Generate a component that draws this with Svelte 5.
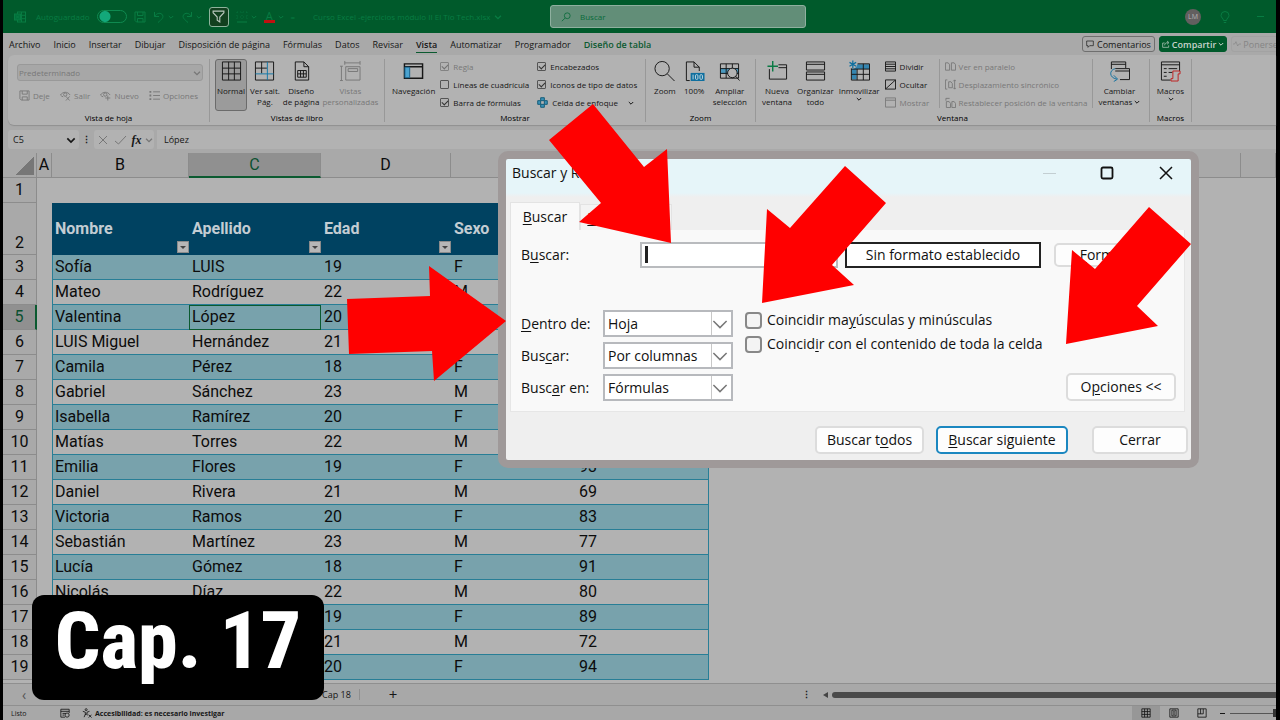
<script>
  const tabs = [
    'Archivo', 'Inicio', 'Insertar', 'Dibujar', 'Disposición de página', 'Fórmulas',
    'Datos', 'Revisar', 'Vista', 'Automatizar', 'Programador', 'Diseño de tabla'
  ];

  const letters = ['A', 'B', 'C', 'D', 'E', 'F', 'G', 'H', 'I', 'J', ''];
  const headers = ['Nombre', 'Apellido', 'Edad', 'Sexo', 'Nota'];

  const people = [
    ['Sofía', 'LUIS', 19, 'F', ''],
    ['Mateo', 'Rodríguez', 22, 'M', ''],
    ['Valentina', 'López', 20, 'F', ''],
    ['LUIS Miguel', 'Hernández', 21, 'M', ''],
    ['Camila', 'Pérez', 18, 'F', ''],
    ['Gabriel', 'Sánchez', 23, 'M', ''],
    ['Isabella', 'Ramírez', 20, 'F', ''],
    ['Matías', 'Torres', 22, 'M', ''],
    ['Emilia', 'Flores', 19, 'F', 93],
    ['Daniel', 'Rivera', 21, 'M', 69],
    ['Victoria', 'Ramos', 20, 'F', 83],
    ['Sebastián', 'Martínez', 23, 'M', 77],
    ['Lucía', 'Gómez', 18, 'F', 91],
    ['Nicolás', 'Díaz', 22, 'M', 80],
    ['', '', 19, 'F', 89],
    ['', '', 21, 'M', 72],
    ['', '', 20, 'F', 94]
  ];

  const arrows = [
    '549,140 601,203 579,222 671,243 667,149 644,167 593,104',
    '347,299 430,296 429,266 506,321 434,381 432,351 349,354',
    '845,166 886,203 832,265 854,285 762,303 767,209 790,228',
    '1149,207 1191,244 1137,306 1158,326 1066,344 1072,250 1095,269'
  ];

  // inner markup of the stroke icons; the first entry is the viewBox
  const icons = {
    excel: ['0 0 12 12', '<rect x="3.5" y="1" width="8" height="10"/><path d="M7.500 1v10M3.500 4.300h8M3.500 7.700h8"/><rect x=".5" y="3" width="6" height="6" fill="#00703a"/><path d="M2 4.500l3 3M5 4.500l-3 3"/>'],
    save: ['0 0 12 12', '<path d="M1 1h10v10H2.500L1 9.500zM3.500 1v3.500h5.500V1M3.500 11V7.500h5.500V11"/>'],
    undo: ['0 0 12 12', '<path d="M1.500 1v4.500H6M1.500 5.500C4 1.500 8 1.500 9.500 4c1.500 2.500-1 4.500-4.500 7.500"/>'],
    redo: ['0 0 12 12', '<path d="M10.500 1v4.500H6M10.500 5.500C8 1.500 4 1.500 2.500 4 1 6.500 3.500 8.500 7 11.500"/>'],
    funnel: ['0 0 12 12', '<path d="M1 1h10v1.500L7.200 6.500V11L4.800 9.500v-3L1 2.500z"/>'],
    borders: ['0 0 12 12', '<path d="M1 11h10" /><path d="M1 1h10M1 6h10M1 1v9M6 1v9M11 1v9" stroke-dasharray="1 2" opacity=".6"/>'],
    caret: ['0 0 6 6', '<path d="M.8 2l2.200 2.200L5.200 2"/>'],
    search: ['0 0 12 12', '<circle cx="7.500" cy="4.500" r="3.500"/><path d="M5 7.200L1 11"/>'],
    bulb: ['0 0 12 12', '<path d="M4.500 9.500c0-2-2.500-3-2.500-5a4 4 0 0 1 8 0c0 2-2.500 3-2.500 5zM4.800 11.500h2.400"/>'],
    bubble: ['0 0 12 12', '<path d="M1 1.500h10v7H5.500L3 11V8.500H1z"/>'],
    share: ['0 0 12 12', '<path d="M4 4.500H1v6.500h9V8M4 8c0-3 2-4 5-4M7.500 1.500L10.500 4 7.500 6.500"/>'],
    pulse: ['0 0 12 12', '<path d="M0 6h2.500L4.500 2.500 7 9l2-3h3"/>'],
    eyeOff: ['0 0 12 12', '<path d="M.5 5.500C3 1.500 8.500 1.500 11 5.500M3.500 7.500C2 7 1 6 .5 5.500M6.500 7l4 4.500M10.500 7l-4 4.500"/><circle cx="5.700" cy="5" r="1.800"/>'],
    eyeNew: ['0 0 12 12', '<path d="M.5 5.500C3 1.500 8.500 1.500 11 5.500M3.500 7.500C2 7 1 6 .5 5.500M8.500 6v5.500M5.700 8.700h5.500"/><circle cx="5.700" cy="5" r="1.800"/>'],
    list: ['0 0 12 12', '<path d="M4.500 2H12M4.500 6H12M4.500 10H12"/><path d="M.5 2h2M.5 6h2M.5 10h2" stroke-width="2"/>'],
    normal: ['0 0 22 22', '<path d="M1.500 1.500h19v19h-19zM1.500 8h19M1.500 14h19M8 1.500v19M14 1.500v19"/>'],
    breaks: ['0 0 22 22', '<path d="M1.500 1.500h19v19h-19zM1.500 8h12M8 1.500v12"/><path d="M14 1.500v19M1.500 14h19" stroke="#1378a8"/>'],
    pageLayout: ['0 0 22 22', '<path d="M4.500 1.500h9l5 5v14h-14zM13.500 1.500v5h5M7 10.500h9v7H7zM7 14h9M10 10.500v7M13 10.500v7"/>'],
    customViews: ['0 0 22 22', '<path d="M5 2.500h16M5 .5v4M21 .5v4M1.500 6v15M0 6h3M0 21h3M6 6.500h15v14H6zM8.500 8.500h10v3h-10z"/>'],
    navigation: ['0 0 22 18', '<path d="M1.500 1.500h19v15h-19zM1.500 4.500h19" stroke-width="1.500"/><path d="M2 5h5v11H2z" fill="#4aa3d0" stroke="#17618a"/>'],
    focus: ['0 0 12 12', '<path d="M4 .8h4V4h3.200v4H8v3.200H4V8H.8V4H4z" fill="#3c93b8" stroke="#0b5674"/><path d="M4 4h4v4H4z" fill="#b3b3b3" stroke="#0b5674"/>'],
    zoom: ['0 0 22 22', '<circle cx="8.500" cy="8.500" r="7.500"/><path d="M14 14l7.500 7.500"/>'],
    hundred: ['0 0 22 22', '<path d="M6 21H2.500V1.500h8l5.500 5.500v4M10.500 1.500V7H16"/><path d="M7 13h14.500v8.500H7z" fill="#0f6f9f" stroke="none"/><path d="M9.500 14.800v5" stroke="#c5d9e2"/><rect x="12" y="14.800" width="2.600" height="5" rx="1.200" stroke="#c5d9e2"/><rect x="16.700" y="14.800" width="2.600" height="5" rx="1.200" stroke="#c5d9e2"/>'],
    zoomSel: ['0 0 22 22', '<path d="M7 8h14v6H1.500V8z" fill="#4a9ac0" stroke="none"/><path d="M1.500 3.500h19v15h-19zM1.500 8.500h19M1.500 13.500h19M7.500 3.500v15M14 3.500v15"/><circle cx="14" cy="13" r="5" fill="#b3b3b3"/><path d="M17.500 16.500l4 4.500"/>'],
    newWindow: ['0 0 22 22', '<path d="M2.500 9v10.500h18V4.500H12M12 7.500h8.500"/><path d="M6 .5v11M.5 6h11" stroke="#0b7a45" stroke-width="1.500"/>'],
    arrange: ['0 0 22 22', '<path d="M1.500 1.500h19v8.500h-19zM1.500 12h19v8.500h-19zM1.500 4h19M1.500 14.500h19"/>'],
    freeze: ['0 0 22 22', '<path d="M3 4h18.500v5H3zM3 9h5v11H3z" fill="#3585b0" stroke="none"/><path d="M2.500 8v12.500h19v-17H9M2.500 9h19M2.500 14.500h19M8.500 9v11.500M15 3.500v17"/><circle cx="4" cy="4" r="4.500" fill="#b3b3b3" stroke="none"/><path d="M4 0v8M.5 2l7 4M7.500 2l-7 4" stroke="#0f6f9f" stroke-width="1.300"/>'],
    split: ['0 0 12 12', '<path d="M.5 1h11v10H.5zM.5 3.500h11M.5 6h11M.5 8.500h11"/>'],
    hide: ['0 0 12 12', '<path d="M.5 1h11v10H.5zM.5 11l11-10"/>'],
    show: ['0 0 12 12', '<path d="M.5 1h11v10H.5zM.5 3.500h11"/>'],
    sideBySide: ['0 0 12 12', '<path d="M.5 2h3l1.500 2v6H.5zM7 2h3l1.500 2v6H7z"/>'],
    syncScroll: ['0 0 12 12', '<path d="M2.500 1H.5v10h2M4 3h2.500L8 5v4.500H4zM10.500 1v10M9 2.500L10.500 1 12 2.500M9 9.500l1.500 1.500L12 9.500"/>'],
    resetPos: ['0 0 12 12', '<path d="M1 4V1.500h4M1.500 5h3L6 7v4.500H1.500zM7.500 5h2.500L11.500 7v4.500h-4z"/>'],
    switchWin: ['0 0 22 22', '<path d="M2.500 9V1.500h15V8M2.500 4h15M6.500 8.500h15v11.500h-10M6.500 11h15"/><path d="M6.500 8.500C0 10 0 18 8 19.500M5 15.500l4 4-4 2.500" stroke="#1170a0"/>'],
    macros: ['0 0 22 22', '<path d="M11 20.500H1.500v-19h19V11M1.500 4.500h19M4 8.500h3M4 12.500h3M4 16.500h3M9 8.500h9M9 12.500h4"/><path d="M13.500 11h7.500v3h-2v7.500h-7.500v-2.500h2z" stroke="#c02020"/>'],
    sheetInfo: ['0 0 12 12', '<path d="M6 11H1V1.500h10V6M1 4h10M3 6.500h4M3 8.500h2"/><circle cx="8.500" cy="8.500" r="2.500"/>'],
    person: ['0 0 12 12', '<circle cx="5" cy="2" r="1.200"/><path d="M1 4l3 1v2.500L2.500 11M9 4L6 5v2.500L7 9M3.500 8.500L5 7l1 1M8 8l3.500 3.500M11.500 8L8 11.500"/>'],
    gridView: ['0 0 12 12', '<path d="M1 1h10v10H1zM1 4.300h10M1 7.700h10M4.300 1v10M7.700 1v10"/>'],
    pageView: ['0 0 12 12', '<path d="M1 1h10v10H1zM3.500 2.500h5v7h-5zM5 4.500h2M5 6h2M5 7.500h2"/>'],
    breakView: ['0 0 12 12', '<path d="M1 1h10v10H1zM1 7h6.500V1M4.300 1v6"/>']
  };

  let active = $state('Vista');
  let within = $state('Hoja');
</script>

{#snippet icon(name, w, h = w)}
  <svg class="icon" width={w} height={h} viewBox={icons[name][0]} aria-hidden="true">{@html icons[name][1]}</svg>
{/snippet}

{#snippet big(name, line1, line2 = '', caret = false, w = 21, h = 21)}
  {@render icon(name, w, h)}
  <span>{line1}</span>
  <span>{line2}{#if caret}{@render icon('caret', 6)}{/if}</span>
{/snippet}

<div class="screen">
  <header class="titlebar">
    <div class="quick">
      {@render icon('excel', 12)}
      <span class="autosave">Autoguardado</span>
      <span class="toggle"></span>
      <button aria-label="Guardar">{@render icon('save', 12)}</button>
      <button aria-label="Deshacer">{@render icon('undo', 12)}{@render icon('caret', 6)}</button>
      <button aria-label="Rehacer">{@render icon('redo', 12)}{@render icon('caret', 6)}</button>
      <button class="filter" aria-label="Filtro">{@render icon('funnel', 13)}</button>
      <button aria-label="Bordes">{@render icon('borders', 12)}{@render icon('caret', 6)}</button>
      <button aria-label="Color de fuente"><span class="font-color">A</span>{@render icon('caret', 6)}</button>
      <span>=</span>
    </div>
    <span class="doc-name">Curso Excel -ejercicios módulo II El Tío Tech.xlsx {@render icon('caret', 8)}</span>
    <label class="search">{@render icon('search', 10)}<input type="text" placeholder="Buscar" aria-label="Buscar" /></label>
    <div class="account">
      <span class="avatar">LM</span>
      {@render icon('bulb', 12)}
      <span class="min"></span>
    </div>
  </header>

  <nav class="tabs">
    {#each tabs as tab}
      <button class="tab" class:active={tab === active} class:context={tab === 'Diseño de tabla'} onclick={() => (active = tab)}>{tab}</button>
    {/each}
    <div class="actions">
      <button class="comments">{@render icon('bubble', 8)}Comentarios</button>
      <button class="share">{@render icon('share', 8)}Compartir{@render icon('caret', 6)}</button>
      <button class="catch-up" disabled>{@render icon('pulse', 8)}Ponerse</button>
    </div>
  </nav>

  <section class="ribbon">
    <div class="group sheet-view">
      <div class="body">
        <div class="view-select">
          <select disabled aria-label="Vista de hoja"><option>Predeterminado</option></select>
          {@render icon('caret', 8)}
        </div>
        <div class="view-actions">
          <button disabled>{@render icon('save', 11)}Deje</button>
          <button disabled>{@render icon('eyeOff', 11)}Salir</button>
          <button disabled>{@render icon('eyeNew', 11)}Nuevo</button>
          <button disabled>{@render icon('list', 11)}Opciones</button>
        </div>
      </div>
      <span class="caption">Vista de hoja</span>
    </div>

    <div class="group book-views">
      <div class="body">
        <button class="big pressed">{@render big('normal', 'Normal')}</button>
        <button class="big">{@render big('breaks', 'Ver salt.', 'Pág.')}</button>
        <button class="big">{@render big('pageLayout', 'Diseño', 'de página')}</button>
        <button class="big" disabled>{@render big('customViews', 'Vistas', 'personalizadas')}</button>
      </div>
      <span class="caption">Vistas de libro</span>
    </div>

    <div class="group show">
      <div class="body">
        <button class="big">{@render big('navigation', 'Navegación')}</button>
        <div class="stack">
          <label class="off"><input type="checkbox" checked disabled />Regla</label>
          <label><input type="checkbox" />Líneas de cuadrícula</label>
          <label><input type="checkbox" checked />Barra de fórmulas</label>
        </div>
        <div class="stack">
          <label><input type="checkbox" checked />Encabezados</label>
          <label><input type="checkbox" checked />Iconos de tipo de datos</label>
          <button class="small">{@render icon('focus', 11)}Celda de enfoque<span class="far">{@render icon('caret', 6)}</span></button>
        </div>
      </div>
      <span class="caption">Mostrar</span>
    </div>

    <div class="group zoom">
      <div class="body">
        <button class="big">{@render big('zoom', 'Zoom')}</button>
        <button class="big">{@render big('hundred', '100%')}</button>
        <button class="big">{@render big('zoomSel', 'Ampliar', 'selección')}</button>
      </div>
      <span class="caption">Zoom</span>
    </div>

    <div class="group window">
      <div class="body">
        <button class="big">{@render big('newWindow', 'Nueva', 'ventana')}</button>
        <button class="big">{@render big('arrange', 'Organizar', 'todo')}</button>
        <button class="big">{@render big('freeze', 'Inmovilizar', '', true)}</button>
        <div class="stack narrow">
          <button class="small">{@render icon('split', 11)}Dividir</button>
          <button class="small">{@render icon('hide', 11)}Ocultar</button>
          <button class="small" disabled>{@render icon('show', 11)}Mostrar</button>
        </div>
        <div class="stack ruled">
          <button class="small" disabled>{@render icon('sideBySide', 11)}Ver en paralelo</button>
          <button class="small" disabled>{@render icon('syncScroll', 11)}Desplazamiento sincrónico</button>
          <button class="small" disabled>{@render icon('resetPos', 11)}Restablecer posición de la ventana</button>
        </div>
        <button class="big ruled">{@render big('switchWin', 'Cambiar', 'ventanas', true)}</button>
      </div>
      <span class="caption">Ventana</span>
    </div>

    <div class="group macros">
      <div class="body">
        <button class="big">{@render big('macros', 'Macros', '', true)}</button>
      </div>
      <span class="caption">Macros</span>
    </div>
  </section>

  <section class="formula-bar">
    <button class="name-box">C5{@render icon('caret', 10)}</button>
    <span class="dots">⋮</span>
    <div class="fx-box">
      <svg class="icon" width="30" height="12" viewBox="0 0 30 12" aria-hidden="true"><path d="M1 2l8 8M9 2l-8 8M17 7l3.500 3L28 2" /></svg>
      <em>fx</em>{@render icon('caret', 8)}
    </div>
    <input class="formula" type="text" value="López" aria-label="Barra de fórmulas" />
  </section>

  <main class="sheet">
    <table>
      <colgroup>
        <col class="c-row" /><col class="c-a" /><col class="c-b" /><col class="c-c" /><col class="c-d" /><col class="c-e" />
        <col class="c-f" /><col class="c-f" /><col class="c-f" /><col class="c-f" /><col class="c-f" /><col />
      </colgroup>
      <thead>
        <tr class="letters">
          <th class="corner"></th>
          {#each letters as letter}
            <th class:current={letter === 'C'}>{letter}</th>
          {/each}
        </tr>
      </thead>
      <tbody>
        <tr><th>1</th><td colspan="11"></td></tr>
        <tr class="titles">
          <th>2</th>
          <td></td>
          {#each headers as title}
            <td class="title"><div>{title}<button aria-label="Filtrar {title}"></button></div></td>
          {/each}
          <td colspan="5"></td>
        </tr>
        {#each people as person, i}
          <tr>
            <th class:current={i === 2}>{i + 3}</th>
            <td></td>
            {#each person as value, c}
              <td class="cell" class:band={i % 2 === 0} class:first={c === 0} class:last={c === 4} class:selected={i === 2 && c === 1}>{value}</td>
            {/each}
            <td colspan="5"></td>
          </tr>
        {/each}
      </tbody>
    </table>
  </main>

  <footer class="sheet-tabs">
    <span class="prev">‹</span>
    <button class="sheet-tab">Cap 18</button>
    <button class="add" aria-label="Nueva hoja">+</button>
    <span class="grip">⋮</span>
    <div class="scroll"><i></i><b></b></div>
  </footer>

  <footer class="status">
    <span class="ready">Listo</span>
    {@render icon('sheetInfo', 10)}
    <span class="access">{@render icon('person', 10)}Accesibilidad: es necesario investigar</span>
    <div class="views">
      <button class="on" aria-label="Normal">{@render icon('gridView', 10)}</button>
      <button aria-label="Diseño de página">{@render icon('pageView', 10)}</button>
      <button aria-label="Salto de página">{@render icon('breakView', 10)}</button>
      <span class="minus"></span>
      <span class="track"></span>
    </div>
  </footer>

  <div class="dialog" role="dialog" aria-label="Buscar y Reemplazar">
    <div class="dialog-title">
      <span>Buscar y Reemplazar</span>
      <svg class="win" width="132" height="16" viewBox="0 0 132 16" aria-hidden="true">
        <path d="M1 8.500h13" stroke="#c3ced2" />
        <rect x="59.500" y="2.500" width="11" height="11" rx="1.500" stroke-width="1.800" />
        <path d="M118 2l12 12M130 2l-12 12" stroke-width="1.500" />
      </svg>
    </div>
    <div class="dialog-tabs">
      <button class="on"><u>B</u>uscar</button>
      <button><u>R</u>eemplazar</button>
    </div>
    <div class="panel">
      <div class="find-row">
        <label for="find">B<u>u</u>scar:</label>
        <span class="find-box"><input id="find" type="text" /><i></i></span>
        <output>Sin formato establecido</output>
        <button class="format"><u>F</u>ormato...</button>
      </div>
      <div class="options">
        <div class="selects">
          <label for="within"><u>D</u>entro de:</label>
          <span class="drop"><select id="within" bind:value={within}><option>Hoja</option><option>Libro</option></select>{@render icon('caret', 18)}</span>
          <label for="order">Bus<u>c</u>ar:</label>
          <span class="drop"><select id="order"><option>Por columnas</option></select>{@render icon('caret', 18)}</span>
          <label for="look">Busc<u>a</u>r en:</label>
          <span class="drop"><select id="look"><option>Fórmulas</option></select>{@render icon('caret', 18)}</span>
        </div>
        <div class="checks">
          <label><input type="checkbox" /><span>Coincidir ma<u>y</u>úsculas y minúsculas</span></label>
          <label><input type="checkbox" /><span>Coincid<u>i</u>r con el contenido de toda la celda</span></label>
        </div>
        <button class="more">O<u>p</u>ciones &lt;&lt;</button>
      </div>
    </div>
    <div class="dialog-buttons">
      <button class="all">Buscar t<u>o</u>dos</button>
      <button class="next"><u>B</u>uscar siguiente</button>
      <button class="close">Cerrar</button>
    </div>
  </div>

  <svg class="arrows" width="1280" height="720" viewBox="0 0 1280 720" aria-hidden="true">
    {#each arrows as points}
      <polygon {points} />
    {/each}
  </svg>

  <div class="chapter">Cap. 17</div>
</div>

<style>
  :global(body) {
    background: #000;
  }

  .screen {
    position: relative;
    display: flex;
    flex-direction: column;
    box-sizing: border-box;
    height: 100vh;
    padding: 0 4px 0 3px;
    overflow: hidden;
    background: linear-gradient(#a9a9a9, #a9a9a9) content-box, #000;
    color: #161616;
    font: 8px/11px 'Open Sans', 'Noto Sans', sans-serif;
  }

  .screen * {
    box-sizing: border-box;
  }

  button, input, select {
    margin: 0;
    padding: 0;
    border: 0;
    background: none;
    color: inherit;
    font: inherit;
  }

  button {
    white-space: nowrap;
  }

  .icon, .win {
    flex: none;
    fill: none;
    stroke: currentColor;
    stroke-width: 1;
  }

  /* title bar */
  .titlebar {
    display: flex;
    flex: none;
    align-items: center;
    height: 33px;
    padding: 0 10px 0 11px;
    background: #005a2b;
    color: #087c43;
  }

  .quick {
    display: flex;
    align-items: center;
    gap: 7px;
    width: 299px;
  }

  .quick button {
    display: flex;
    align-items: center;
    gap: 3px;
  }

  .autosave {
    margin-left: 3px;
  }

  .toggle {
    width: 30px;
    height: 13px;
    border: 1px solid #0f8a50;
    border-radius: 7px;
    background: radial-gradient(circle at 7px 50%, #13a87a 5px, transparent 6px);
  }

  .quick .filter {
    justify-content: center;
    width: 20px;
    height: 20px;
    border: 1px solid #8eb39c;
    border-radius: 3px;
    background: #12401f;
    color: #bcc9c0;
  }

  .font-color {
    border-bottom: 3px solid #c01010;
    font-size: 11px;
    line-height: 9px;
    padding: 0 2px;
  }

  .doc-name {
    display: flex;
    align-items: center;
    gap: 3px;
    width: 237px;
  }

  .search {
    display: flex;
    align-items: center;
    gap: 9px;
    width: 256px;
    height: 23px;
    padding: 0 10px;
    border: 1px solid #8fb09f;
    border-radius: 3px;
    background: #628e78;
    color: #0a6b3b;
  }

  .search input {
    width: 100%;
  }

  .search input::placeholder {
    color: #0a6b3b;
  }

  .account {
    display: flex;
    align-items: center;
    gap: 18px;
    margin-left: auto;
  }

  .avatar {
    width: 16px;
    height: 16px;
    border-radius: 50%;
    background: #625f5f;
    color: #b5b5b5;
    font-size: 7px;
    line-height: 16px;
    text-align: center;
  }

  .min {
    width: 7px;
    margin: 0 2px 0 8px;
    border-top: 1px solid;
  }

  /* tabs */
  .tabs {
    display: flex;
    flex: none;
    gap: 13px;
    height: 22px;
    padding-left: 6px;
    overflow: hidden;
    font-size: 9px;
  }

  .tab {
    height: 20px;
    padding-top: 3px;
    border-bottom: 1px solid transparent;
  }

  .tab.active {
    border-bottom-color: #0b5a30;
    font-weight: 600;
  }

  .tab.context {
    color: #0b5a30;
    font-weight: 600;
  }

  .actions {
    display: flex;
    gap: 4px;
    width: 194px;
    margin: 3px 0 3px auto;
  }

  .actions button {
    display: flex;
    flex: none;
    align-items: center;
    gap: 3px;
    padding: 0 3px;
    border: 1px solid #6f6f6f;
    border-radius: 3px;
  }

  .actions .share {
    gap: 2px;
    padding: 0 2px;
    border-color: #005a2b;
    background: #005a2b;
    color: #c8d4cc;
    font-weight: 600;
  }

  .actions .catch-up {
    gap: 2px;
    padding: 0 1px;
    border-color: #a2a2a2;
    color: #858585;
  }

  /* ribbon */
  .ribbon {
    display: flex;
    flex: none;
    height: 70px;
    margin-left: 5px;
    padding-top: 4px;
    border-radius: 6px 0 0 6px;
    background: #b2b2b2;
    box-shadow: 0 1px 1px #8f8f8f;
  }

  .group {
    display: flex;
    flex: none;
    flex-direction: column;
    height: 63px;
    border-right: 1px solid #989898;
  }

  .sheet-view { width: 202px; }
  .book-views { width: 175px; }
  .show { width: 261px; }
  .zoom { width: 110px; }
  .window { width: 394px; }
  .macros { width: 42px; }

  .body {
    display: flex;
    flex: 1;
    justify-content: center;
  }

  .caption {
    color: #000;
    line-height: 9px;
    text-align: center;
  }

  .sheet-view .body {
    flex-direction: column;
    justify-content: flex-start;
    padding: 5px 6px 0 9px;
  }

  .view-select {
    display: flex;
    align-items: center;
    height: 17px;
    padding: 0 1px;
    border: 1px solid #999;
    border-radius: 3px;
    background: #a7a7a7;
    color: #787878;
  }

  .view-select select {
    flex: 1;
    appearance: none;
    opacity: 1;
  }

  .view-actions {
    display: flex;
    justify-content: space-between;
    padding: 9px 5px 0 2px;
  }

  .view-actions button {
    display: flex;
    align-items: center;
    gap: 3px;
  }

  button:disabled, .off {
    color: #787878;
  }

  .big {
    display: flex;
    flex: none;
    flex-direction: column;
    align-items: center;
    height: 52px;
    padding-top: 1px;
  }

  .big > .icon {
    height: 22px;
    margin-bottom: 3px;
  }

  .big span {
    display: flex;
    align-items: center;
    gap: 2px;
  }

  .book-views .body {
    justify-content: flex-start;
    gap: 3px;
    padding-left: 5px;
  }

  .pressed {
    width: 32px;
    border: 1px solid #6b6b6b;
    border-radius: 3px;
    background: #9b9b9b;
    padding-top: 0;
  }

  .stack {
    display: flex;
    flex-direction: column;
    gap: 7px;
    padding-top: 2px;
  }

  .stack label, .small {
    display: flex;
    align-items: center;
    gap: 4px;
    height: 11px;
    white-space: nowrap;
  }

  .stack input {
    width: 9px;
    height: 9px;
    border: 1px solid #555;
    border-radius: 1px;
    appearance: none;
  }

  .stack input:checked::after {
    content: '';
    display: block;
    width: 5px;
    height: 3px;
    margin: 1px;
    border: solid #333;
    border-width: 0 0 1px 1px;
    transform: rotate(-45deg);
  }

  .off input {
    opacity: 0.5;
  }

  .far {
    margin-left: 6px;
    height: 6px;
    line-height: 0;
  }

  .show .body {
    justify-content: flex-start;
    gap: 8px;
    padding-left: 7px;
  }

  .show .big {
    margin-right: -3px;
  }

  .zoom .body {
    gap: 8px;
  }

  .window .body {
    justify-content: flex-start;
    gap: 5px;
    padding-left: 6px;
  }

  .narrow {
    width: 49px;
  }

  .ruled {
    height: 49px;
    padding-left: 5px;
    border-left: 1px solid #989898;
  }

  .ruled .small {
    gap: 3px;
  }

  /* formula bar */
  .formula-bar {
    display: flex;
    flex: none;
    align-items: center;
    height: 28px;
    padding: 1px 0 0 5px;
    font-size: 9px;
  }

  .name-box {
    display: flex;
    align-items: center;
    justify-content: space-between;
    width: 71px;
    height: 19px;
    padding: 0 3px 0 5px;
    border-radius: 3px;
    background: #b2b2b2;
  }

  .dots {
    width: 15px;
    text-align: center;
    font-weight: 700;
  }

  .fx-box {
    display: flex;
    align-items: center;
    justify-content: space-between;
    width: 60px;
    height: 19px;
    padding: 0 1px 0 4px;
    border-radius: 3px;
    background: #b2b2b2;
    color: #777;
  }

  .fx-box em {
    color: #161616;
    font: italic bold 12px/12px 'Liberation Serif', serif;
  }

  .formula {
    flex: 1;
    height: 19px;
    margin-left: 3px;
    padding-left: 7px;
    background: #b2b2b2;
  }

  /* grid */
  .sheet {
    flex: 1;
    overflow: hidden;
    background: #b2b2b2;
  }

  table {
    width: 100%;
    min-width: 1273px;
    border-collapse: separate;
    border-spacing: 0;
    table-layout: fixed;
    color: #0c0c0c;
    font: 16px/22px Roboto, 'Open Sans', sans-serif;
  }

  .c-row { width: 34px; }
  .c-a { width: 15px; }
  .c-b { width: 137px; }
  .c-c { width: 132px; }
  .c-d { width: 130px; }
  .c-e { width: 125px; }
  .c-f { width: 133px; }

  tr {
    height: 25px;
  }

  th, td {
    padding: 0;
    white-space: nowrap;
  }

  th {
    border-right: 1px solid #8c8c8c;
    border-bottom: 1px solid #8c8c8c;
    background: #a9a9a9;
    font-weight: 400;
  }

  th.current {
    background: #909090;
    color: #0b5030;
  }

  tbody th.current {
    border-right: 2px solid #0b5a30;
  }

  .letters th.current {
    border-bottom: 2px solid #0b5a30;
  }

  .corner {
    background: linear-gradient(135deg, transparent 50%, #777 50%) 13px 4px / 18px 18px no-repeat #a9a9a9;
  }

  .titles {
    height: 52px;
  }

  .titles th {
    vertical-align: bottom;
  }

  .title {
    padding-left: 3px;
    background: #004261;
    color: #c3cdd3;
    font-weight: 700;
  }

  .title div {
    position: relative;
    height: 50px;
    line-height: 50px;
  }

  .title button {
    position: absolute;
    right: 0;
    bottom: 1px;
    display: grid;
    place-items: center;
    width: 12px;
    height: 12px;
    border: 1px solid #8b8b8b;
    background: #b7b7b7;
  }

  .title button::after {
    content: '';
    border: 3px solid transparent;
    border-top-color: #444;
    border-bottom: 0;
  }

  .cell {
    padding-left: 3px;
    border-bottom: 1px solid #287e96;
  }

  .cell.first {
    border-left: 1px solid #287e96;
    padding-left: 2px;
  }

  .cell.last {
    border-right: 1px solid #287e96;
  }

  .band {
    background: #78a2ac;
  }

  .selected {
    border-color: #0b5a30;
    outline: 1px solid #0b5a30;
    outline-offset: -1px;
  }

  /* bottom bars */
  .sheet-tabs, .status {
    display: flex;
    flex: none;
    align-items: center;
    border-top: 1px solid #8f8f8f;
    background: #a8a8a8;
  }

  .sheet-tabs {
    height: 22px;
    font-size: 9px;
  }

  .prev {
    width: 319px;
    padding-left: 19px;
    color: #555;
    font-size: 14px;
  }

  .sheet-tab {
    padding-right: 8px;
    border-right: 1px solid #8f8f8f;
  }

  .add {
    margin-left: 29px;
    font-size: 15px;
  }

  .grip {
    margin-left: auto;
    font-weight: 700;
  }

  .scroll {
    display: flex;
    align-items: center;
    gap: 4px;
    width: 465px;
    padding-left: 12px;
  }

  .scroll i {
    border: 3px solid transparent;
    border-right: 5px solid #444;
    border-left: 0;
  }

  .scroll b {
    flex: 1;
    height: 6px;
    border-radius: 3px 0 0 3px;
    background: #4a4a4a;
  }

  .status {
    height: 15px;
    padding-left: 8px;
    font-size: 7px;
  }

  .ready {
    width: 49px;
  }

  .access {
    display: flex;
    align-items: center;
    gap: 3px;
    margin-left: 12px;
    font-weight: 700;
  }

  .views {
    display: flex;
    align-items: center;
    margin-left: auto;
  }

  .views button {
    display: grid;
    place-items: center;
    width: 28px;
    height: 14px;
  }

  .views .on {
    background: #979797;
  }

  .minus {
    width: 5px;
    margin: 0 5px 0 4px;
    border-top: 1px solid;
  }

  .track {
    width: 46px;
    height: 8px;
    border-right: 3px solid #333;
    background: linear-gradient(#555, #555) 0 50% / 100% 1px no-repeat;
  }

  /* find dialog */
  .dialog {
    position: absolute;
    top: 151px;
    left: 498px;
    display: flex;
    flex-direction: column;
    width: 701px;
    border: 8px solid #9f9999;
    border-radius: 10px;
    background: linear-gradient(#e6f5f9 34px, #efefef 38px);
    color: #111;
    font: 500 14px/20px 'Open Sans', 'Noto Sans', sans-serif;
  }

  .dialog u {
    text-underline-offset: 2px;
  }

  .dialog-title {
    display: flex;
    align-items: center;
    justify-content: space-between;
    height: 28px;
    padding: 0 17px 0 6px;
  }

  .dialog-tabs {
    display: flex;
    align-items: flex-end;
    height: 43px;
    padding: 15px 0 0 4px;
  }

  .dialog-tabs button {
    width: 92px;
    height: 26px;
    border: 1px solid #e3e3e3;
    border-bottom: 0;
    background: #f3f3f3;
  }

  .dialog-tabs .on {
    width: 70px;
    height: 28px;
    background: #f9f9f9;
  }

  .panel {
    margin: 0 6px 0 4px;
    padding: 12px 8px 10px 10px;
    border: 1px solid #e6e6e6;
    border-top: 0;
    background: #f9f9f9;
  }

  .find-row {
    display: flex;
    align-items: center;
    height: 26px;
  }

  .find-row label {
    width: 119px;
  }

  .find-box {
    position: relative;
    width: 198px;
    height: 26px;
  }

  .find-box input {
    width: 100%;
    height: 100%;
    padding-left: 8px;
    border: 2px solid #b9bbbe;
    background: #fff;
  }

  .find-box i {
    position: absolute;
    top: 4px;
    left: 5px;
    width: 3px;
    height: 17px;
    background: #222;
  }

  output {
    width: 196px;
    height: 26px;
    margin: 0 13px 0 7px;
    border: 2px solid #222;
    background: #fff;
    line-height: 22px;
    text-align: center;
  }

  .format, .more, .dialog-buttons button {
    height: 28px;
    border: 2px solid #dcdcdc;
    border-radius: 5px;
    background: #fdfdfd;
  }

  .format {
    width: 118px;
    height: 24px;
    line-height: 20px;
  }

  .options {
    display: flex;
    margin-top: 42px;
  }

  .selects {
    display: grid;
    grid-template-columns: 82px 130px;
    gap: 5px 0;
    align-items: center;
  }

  .drop {
    position: relative;
    height: 27px;
  }

  .drop select {
    width: 100%;
    height: 100%;
    padding-left: 3px;
    border: 2px solid #b7b9bd;
    background: linear-gradient(#c8c8c8, #c8c8c8) 106px 0 / 1px 100% no-repeat #fff;
    appearance: none;
  }

  .drop .icon {
    position: absolute;
    top: 5px;
    right: 4px;
    stroke: #777;
    stroke-width: 0.500;
    pointer-events: none;
  }

  .checks {
    display: flex;
    flex-direction: column;
    gap: 4px;
    margin-left: 12px;
  }

  .checks label {
    display: flex;
    align-items: center;
    gap: 5px;
    height: 20px;
    white-space: nowrap;
  }

  .checks input {
    width: 17px;
    height: 17px;
    border: 2px solid #888;
    border-radius: 4px;
    background: #f4f4f4;
    appearance: none;
  }

  .more {
    align-self: flex-end;
    width: 110px;
    margin-left: auto;
  }

  .dialog-buttons {
    display: flex;
    justify-content: flex-end;
    padding: 14px 3px 6px;
  }

  .dialog-buttons .all {
    width: 109px;
  }

  .dialog-buttons .next {
    width: 132px;
    margin: 0 24px 0 12px;
    border-color: #1b87c0;
  }

  .dialog-buttons .close {
    width: 96px;
  }

  .arrows {
    position: absolute;
    top: 0;
    left: 0;
    fill: #f00;
    pointer-events: none;
  }

  .chapter {
    position: absolute;
    bottom: 20px;
    left: 32px;
    width: 292px;
    height: 105px;
    border-radius: 12px;
    background: #000;
    color: #fff;
    font: 800 80px/92px 'Roboto Condensed', 'Liberation Sans Narrow', 'DejaVu Sans Condensed', sans-serif;
    text-align: center;
  }
</style>
